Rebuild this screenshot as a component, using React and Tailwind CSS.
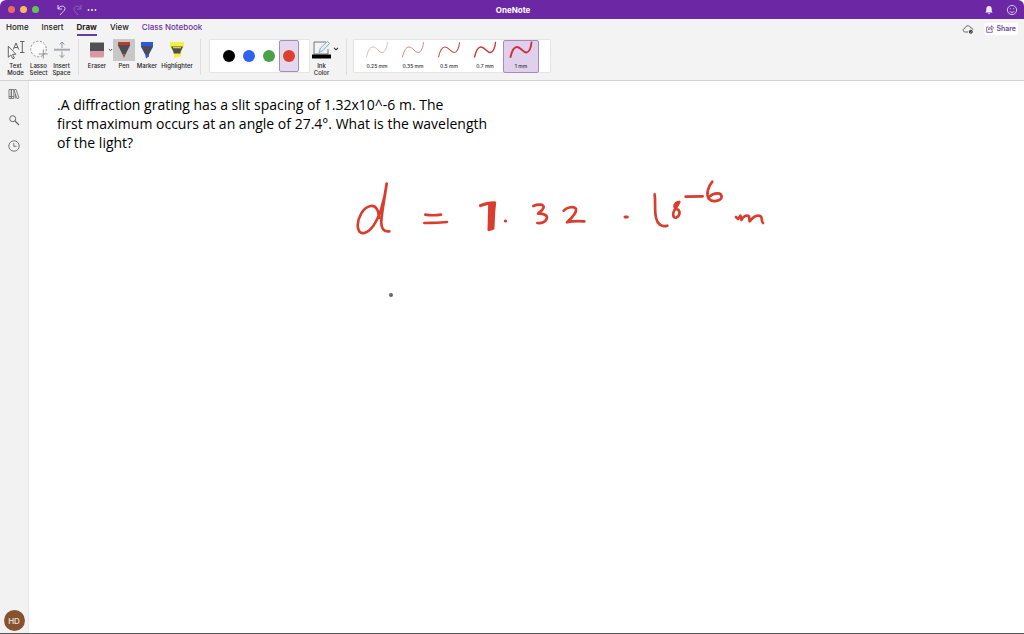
import React, { useState } from 'react';

const TABS = ['Home', 'Insert', 'Draw', 'View', 'Class Notebook'];

const INK_COLORS = [
  { name: 'Black', className: 'bg-black' },
  { name: 'Blue', className: 'bg-[#2f62ee]' },
  { name: 'Green', className: 'bg-[#4aa147]' },
  { name: 'Red', className: 'bg-[#dc402f]' },
];

const PEN_SIZES = [
  { label: '0.25 mm', stroke: 0.6, color: '#c98d8d' },
  { label: '0.35 mm', stroke: 0.8, color: '#c66a6a' },
  { label: '0.5 mm', stroke: 1.1, color: '#c34d4d' },
  { label: '0.7 mm', stroke: 1.4, color: '#c53a3a' },
  { label: '1 mm', stroke: 1.9, color: '#cf2e3a' },
];

const Divider = () => <div className="h-9 w-px shrink-0 bg-[#dedede]" />;

const Chevron = () => (
  <svg className="h-1 w-1.5" viewBox="0 0 6 4" fill="none" stroke="#333" strokeWidth="1.1" aria-hidden="true">
    <path d="M1 .8l2 2 2-2" />
  </svg>
);

const TextModeIcon = () => (
  <svg className="h-5 w-5" viewBox="0 0 20 20" fill="none" stroke="#555" strokeWidth="0.9" aria-hidden="true">
    <path d="M2.3 6.3v11l2.6-2.4 2 3.9 1.5-.8-1.9-3.7h3.4z" fill="#fff" />
    <path d="M7.3 9.500l2.7-6.500 2.7 6.500M8.3 7.500h3.500" />
    <path d="M14 1.5h4.5M14 12.5h4.5M16.3 1.5v11" />
  </svg>
);

const LassoIcon = () => (
  <svg className="h-5 w-5" viewBox="0 0 20 20" fill="none" stroke="#888" strokeWidth="0.9" aria-hidden="true">
    <circle cx="9.5" cy="9" r="7.8" fill="#fafafa" strokeDasharray="2.2 1.6" />
    <path d="M14.3 9.5v9M9.8 14h9" />
  </svg>
);

const InsertSpaceIcon = () => (
  <svg className="h-5 w-5" viewBox="0 0 20 20" fill="none" stroke="#8a949c" strokeWidth="1" aria-hidden="true">
    <path d="M2 9.7h16" stroke="#a5abb0" strokeWidth="2" />
    <path d="M10 2v6M7.6 4.4L10 2l2.4 2.4M10 11.5v6M7.6 15.1l2.4 2.4 2.4-2.4" />
  </svg>
);

const EraserIcon = () => (
  <svg className="h-5 w-4" viewBox="0 0 16 20" aria-hidden="true">
    <path d="M1 2.500h14V11H1z" fill="#505052" />
    <path d="M1 11h14v5a1.500 1.500 0 0 1-1.500 1.500h-11A1.500 1.500 0 0 1 1 16z" fill="#d998a5" />
  </svg>
);

const PenIcon = () => (
  <svg className="h-5 w-4" viewBox="0 0 16 20" aria-hidden="true">
    <path d="M2 2h12v3.500L9.500 14.500h-3L2 5.500z" fill="#4d4d4f" />
    <path d="M2 2h12v3H2zM6.500 14.500h3L8 18z" fill="#c0392f" />
  </svg>
);

const MarkerIcon = () => (
  <svg className="h-5 w-4" viewBox="0 0 16 20" aria-hidden="true">
    <path d="M2 2h12v5l-4 7v2.500L7 18.500 6 14 2 7z" fill="#2f59dc" />
    <path d="M3 6h10v1.500L10 14H6L3 7.500z" fill="#4d4d4f" />
  </svg>
);

const HighlighterIcon = () => (
  <svg className="h-5 w-4" viewBox="0 0 16 20" aria-hidden="true">
    <path d="M1 2h14v4.500L12 12v4.500L5 18v-6L1 6.500z" fill="#f4f04a" />
    <path d="M2 6.500h12l-2.500 5.500v1.500h-7V12z" fill="#4d4d4f" />
    <path d="M4 7h8v1.300H4z" fill="#d6d24a" />
  </svg>
);

const ToolButton = ({ icon, label, className = '', active = false }) => (
  <button
    type="button"
    aria-pressed={active}
    className={`flex shrink-0 flex-col items-center text-[6px] leading-[7px] font-medium text-[#222] ${className}`}
  >
    <span className={`flex h-[22px] w-[22px] items-center justify-center ${active ? 'bg-[#c9c8c9]' : ''}`}>{icon}</span>
    <span className="mt-px text-center">{label}</span>
  </button>
);

const TitleBar = () => (
  <header className="flex h-[19px] items-center justify-between rounded-t-md bg-[#6c27a4] text-white">
    <div className="flex flex-1 items-center pl-2">
      <div className="flex gap-[5px]">
        <span className="h-[7px] w-[7px] rounded-full bg-[#ed6a5e]" />
        <span className="h-[7px] w-[7px] rounded-full bg-[#f4bf5a]" />
        <span className="h-[7px] w-[7px] rounded-full bg-[#5fc454]" />
      </div>
      <div className="ml-4 flex items-center gap-1">
        <button type="button" aria-label="Undo">
          <svg className="h-3 w-3" viewBox="0 0 12 12" fill="none" stroke="#e4d5f0" strokeWidth="1">
            <path d="M3 1v4h4M3 5c2-4 7-3.500 7-.3 0 2-3 3.500-5 6.300" />
          </svg>
        </button>
        <button type="button" aria-label="Redo">
          <svg className="h-3 w-3" viewBox="0 0 12 12" fill="none" stroke="#925fbd" strokeWidth="1">
            <path d="M10 1v4H6M10 5C8 1 3 1.500 3 5c0 2 2 3.500 4 6" />
          </svg>
        </button>
        <button type="button" aria-label="More">
          <svg className="h-2.5 w-2.5" viewBox="0 0 10 10" fill="#fff">
            <circle cx="1.500" cy="5" r=".9" />
            <circle cx="5" cy="5" r=".9" />
            <circle cx="8.500" cy="5" r=".9" />
          </svg>
        </button>
      </div>
    </div>
    <h1 className="text-[8px] leading-none font-bold">OneNote</h1>
    <div className="flex flex-1 items-center justify-end gap-3 pr-1.5">
      <button type="button" aria-label="Notifications">
        <svg className="h-2.5 w-2.5" viewBox="0 0 10 10" fill="#f3eaf9">
          <path d="M5 1c2 0 2.700 1.400 2.700 3v2L8.700 7.600H1.300L2.300 6V4c0-1.600.7-3 2.700-3zM4 8.200h2a1 1 0 0 1-2 0z" />
        </svg>
      </button>
      <button type="button" aria-label="Feedback">
        <svg className="h-3 w-3" viewBox="0 0 12 12" fill="none" stroke="#e4d5f0" strokeWidth=".9">
          <circle cx="6" cy="6" r="4.600" />
          <path d="M3.800 7.200c1 1.700 3.400 1.700 4.400 0M4.400 4.200v1M7.600 4.200v1" />
        </svg>
      </button>
    </div>
  </header>
);

const Tabs = ({ current, onChange }) => (
  <div className="flex h-[19px] items-center justify-between px-1.5">
    <nav className="flex items-center gap-[13px] text-[8px] leading-[13px]">
      {TABS.map((tab) => (
        <button
          key={tab}
          type="button"
          onClick={() => onChange(tab)}
          className={`border-b-2 ${
            tab === current ? 'border-[#68409a] font-bold' : 'border-transparent font-medium'
          } ${tab === 'Class Notebook' ? 'text-[#6b2fa5]' : 'text-[#222]'}`}
        >
          {tab}
        </button>
      ))}
    </nav>
    <div className="flex items-center gap-2.5">
      <svg className="h-3 w-3" viewBox="0 0 12 12" fill="none" stroke="#555" strokeWidth=".9" aria-hidden="true">
        <path d="M6 9H3.300C.5 9 .5 5.600 3 5.300 3.500 2 8 2 8.500 4.800c1.500 0 2.300.9 2.300 2" />
        <circle cx="8.800" cy="8.800" r="2" fill="#444" stroke="none" />
        <path d="M7.900 8.800l.7.7 1.200-1.300" stroke="#ddd" strokeWidth=".5" />
      </svg>
      <button
        type="button"
        className="flex h-3 items-center gap-0.5 rounded-xs bg-white px-0.5 text-[7px] leading-none font-semibold text-[#69479a]"
      >
        <svg className="h-2 w-2" viewBox="0 0 8 8" fill="none" stroke="#69479a" strokeWidth=".8" aria-hidden="true">
          <path d="M2.500 2H.700v5.300h5.600V5.500M2.500 5c0-2 1-2.800 3-2.800V.7L7.600 3 5.500 5V3.600C4.200 3.600 3.200 4 2.500 5z" />
        </svg>
        Share
      </button>
    </div>
  </div>
);

const Ribbon = () => {
  const [color, setColor] = useState('Red');
  const [size, setSize] = useState('1 mm');

  return (
    <div className="flex h-[43px] items-start border-b border-[#d2d2d2] pt-px pl-1">
      <ToolButton className="w-[23px]" icon={<TextModeIcon />} label={<>Text<br />Mode</>} />
      <ToolButton className="w-[23px]" icon={<LassoIcon />} label={<>Lasso<br />Select</>} />
      <ToolButton className="w-[23px]" icon={<InsertSpaceIcon />} label={<>Insert<br />Space</>} />
      <div className="w-[5px]" />
      <Divider />
      <div className="w-[7px]" />
      <ToolButton className="w-[22px]" icon={<EraserIcon />} label="Eraser" />
      <button type="button" aria-label="Eraser options" className="flex h-[22px] w-[5px] items-center">
        <Chevron />
      </button>
      <ToolButton className="w-[22px]" active icon={<PenIcon />} label="Pen" />
      <ToolButton className="w-6" icon={<MarkerIcon />} label="Marker" />
      <ToolButton className="w-9" icon={<HighlighterIcon />} label="Highlighter" />
      <div className="w-[5px]" />
      <Divider />
      <div className="ml-2 flex h-[34px] w-[101px] shrink-0 items-center border border-[#e6e6e6] bg-white pl-[9px]">
        {INK_COLORS.map((c) => (
          <button
            key={c.name}
            type="button"
            aria-label={c.name}
            onClick={() => setColor(c.name)}
            className={`flex h-8 w-5 items-center justify-center rounded-xs border ${
              color === c.name ? 'border-[#a58bbb] bg-[#e5d8ee]' : 'border-transparent'
            }`}
          >
            <span className={`h-3 w-3 rounded-full ${c.className}`} />
          </button>
        ))}
      </div>
      <ToolButton
        className="w-[23px]"
        label={<>Ink<br />Color</>}
        icon={
          <svg className="h-5 w-5 shrink-0" viewBox="0 0 20 20" fill="none" aria-hidden="true">
            <path d="M14 2H2v12h14V9" stroke="#666" strokeWidth=".9" />
            <path d="M7 12.500l1.500-4.500L15.500 1.500l2 2L11 10.500z" fill="#e8f1f8" stroke="#7d9cb8" strokeWidth=".9" />
            <path d="M0 14.500h19v4H0z" fill="#000" />
          </svg>
        }
      />
      <button type="button" aria-label="Ink color options" className="flex h-5 w-1.5 items-center">
        <Chevron />
      </button>
      <div className="w-[7px]" />
      <Divider />
      <div className="ml-1.5 flex h-[34px] w-[198px] shrink-0 items-center border border-[#e6e6e6] bg-white pl-[5px]">
        {PEN_SIZES.map((pen) => (
          <button
            key={pen.label}
            type="button"
            onClick={() => setSize(pen.label)}
            className={`flex h-[33px] w-9 flex-col items-center rounded-xs border text-[5px] leading-[6px] font-medium text-[#333] ${
              size === pen.label ? 'border-[#a58bbb] bg-[#e0d0ec]' : 'border-transparent'
            }`}
          >
            <svg className="h-[18px] w-6" viewBox="0 0 24 18" fill="none" stroke={pen.color} strokeWidth={pen.stroke} strokeLinecap="round" aria-hidden="true">
              <path d="M1.500 16C3 9.500 5 6 8 6c4 0 6 6 9.500 5.500C20.500 11 22 6 22.500 1.500" />
            </svg>
            <span className="mt-1">{pen.label}</span>
          </button>
        ))}
      </div>
    </div>
  );
};

const Sidebar = () => (
  <aside className="flex w-[29px] shrink-0 flex-col items-center border-r border-[#e8e8e8] bg-[#f3f2f3] pt-[7px] pb-0.5">
    <div className="flex flex-col items-center gap-3.5">
      <button type="button" aria-label="Notebooks">
        <svg className="h-3 w-3" viewBox="0 0 12 12" fill="none" stroke="#666" strokeWidth=".8">
          <path d="M1 1.500h2.300v9H1zM3.300 1.500h2.500v9H3.300zM6 2l2-.6 3 8.500-2 .7zM1 8.500h4.800M7.300 6v4.500" />
        </svg>
      </button>
      <button type="button" aria-label="Search">
        <svg className="h-3 w-3" viewBox="0 0 12 12" fill="none" stroke="#666" strokeWidth="1">
          <circle cx="4.700" cy="4.700" r="3" />
          <path d="M7 7l4 4" strokeWidth="1.300" />
        </svg>
      </button>
      <button type="button" aria-label="Recent">
        <svg className="h-3 w-3" viewBox="0 0 12 12" fill="none" stroke="#666" strokeWidth=".9">
          <circle cx="6" cy="6" r="5.200" />
          <path d="M5.800 3v3.300h2.700" />
        </svg>
      </button>
    </div>
    <button
      type="button"
      className="mt-auto flex h-[21px] w-[21px] items-center justify-center rounded-full bg-[#85542f] text-[8px] font-medium text-[#f3e6dc]"
    >
      HD
    </button>
  </aside>
);

// Pen strokes on the page, three units to a pixel
const Ink = () => (
  <svg
    className="absolute top-[89px] left-[311px] h-[130px] w-[450px]"
    viewBox="0 0 1350 390"
    fill="none"
    stroke="#d83d2e"
    strokeWidth="8"
    strokeLinecap="round"
    strokeLinejoin="round"
    role="img"
    aria-label="Handwritten note"
  >
    <path d="M117 144C116 120 108 106 92 108C68 112 54 144 53 166C53 182 60 192 73 189C96 183 112 151 123 119C131 94 137 66 140 41C134 84 126 124 124 152C123 174 130 186 148 184" />
    <path d="M256 134C272 137 288 136 303 134M253 159C276 158 298 159 321 156" />
    <path d="M421 107C434 101 448 98 464 98L461 128L459 175L447 179L449 104M455 102L451 145L454 176" strokeWidth="9" />
    <path d="M496 153h1" strokeWidth="9" />
    <path d="M580 108C594 102 613 102 611 112C609 121 600 126 594 131C608 130 621 134 621 143C620 154 606 161 592 159" />
    <path d="M671 122C681 111 703 107 708 117C711 129 693 146 681 157C698 152 716 153 733 154" />
    <path d="M855 141h7" strokeWidth="9" />
    <path d="M944 73C947 98 943 120 948 143C952 161 964 173 982 167" />
    <path d="M1014 96C1004 99 1000 110 1008 117C1023 119 1021 137 1009 143C998 146 997 129 1004 119C1010 111 1014 102 1018 96" />
    <path d="M1037 80L1088 79" />
    <path d="M1117 35C1104 50 1098 72 1106 86C1117 99 1144 93 1145 80C1144 66 1121 68 1109 80" />
    <path d="M1188 141L1194 147L1201 137L1204 150C1210 138 1221 134 1227 139L1229 154C1239 141 1250 134 1261 138C1269 142 1262 154 1269 159" />
    <circle cx="153" cy="375" r="6" fill="#666" stroke="none" />
  </svg>
);

const App = () => {
  const [tab, setTab] = useState('Draw');

  return (
    <div className="flex min-h-screen flex-col border-b border-[#555] bg-white font-['Inter',sans-serif]">
      <TitleBar />
      <div className="bg-[#f4f3f4]">
        <Tabs current={tab} onChange={setTab} />
        <Ribbon />
      </div>
      <div className="flex flex-1">
        <Sidebar />
        <main className="relative min-w-0 flex-1 px-7 pt-3.5">
          <p className="font-['Open_Sans',sans-serif] text-[14px] leading-[19px] text-black">
            .A diffraction grating has a slit spacing of 1.32x10^-6 m. The
            <br />
            first maximum occurs at an angle of 27.4°. What is the wavelength
            <br />
            of the light?
          </p>
          <Ink />
        </main>
      </div>
    </div>
  );
};

export default App;
